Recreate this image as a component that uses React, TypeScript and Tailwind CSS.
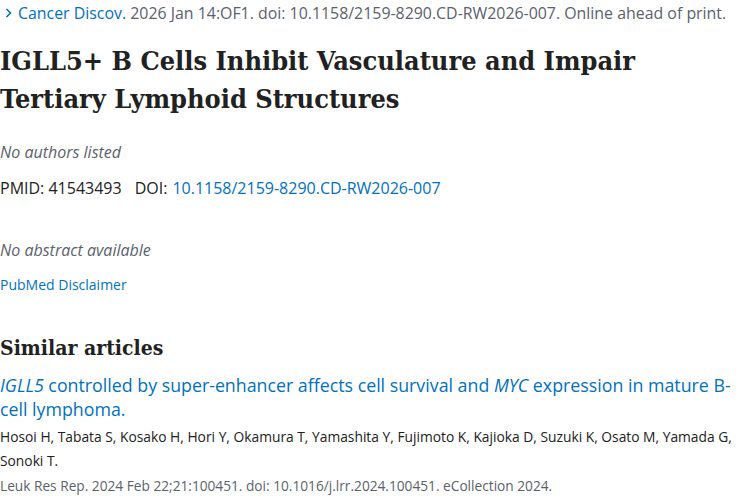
import React from "react";

const sans = { fontFamily: '"Open Sans", "Noto Sans", sans-serif' };
const serif = { fontFamily: '"DejaVu Serif Condensed", "DejaVu Serif", serif' };

export default function App() {
  return (
    <div className="w-[750px] h-[500px] overflow-hidden bg-white text-[#212121]" style={sans}>
      <div className="flex items-center h-[26px] text-[15.9px] leading-[26px]">
        <svg width="14" height="14" viewBox="0 0 14 14" className="ml-[2px] mr-[2px]">
          <path d="M4.5 3 L8.5 7 L4.5 11" fill="none" stroke="#0071bc" strokeWidth="1.6" />
        </svg>
        <span className="text-[#0071bc]">Cancer Discov.</span>
        <span className="text-[#5b616b]">&nbsp;2026 Jan 14:OF1. doi: 10.1158/2159-8290.CD-RW2026-007. Online ahead of print.</span>
      </div>
      <h1 className="mt-[16px] text-[26.9px] leading-[38px] font-bold text-[#212121]" style={serif}>
        IGLL5+ B Cells Inhibit Vasculature and Impair
        <br />
        Tertiary Lymphoid Structures
      </h1>
      <div className="mt-[22px] text-[16px] italic leading-[24px] text-[#5b616b]">No authors listed</div>
      <div className="mt-[12px] text-[16px] leading-[24px] flex">
        <span>PMID: 41543493</span>
        <span className="ml-[13px]">DOI: </span>
        <span className="ml-[5px] text-[#0071bc]">10.1158/2159-8290.CD-RW2026-007</span>
      </div>
      <div className="mt-[38px] text-[16px] italic leading-[24px] text-[#5b616b]">No abstract available</div>
      <div className="mt-[11px] text-[14px] leading-[24px] text-[#0071bc]">PubMed Disclaimer</div>
      <h2 className="mt-[36px] text-[21px] leading-[30px] font-bold" style={serif}>Similar articles</h2>
      <div className="mt-[10px] text-[17.8px] leading-[24px] text-[#0071bc]">
        <i>IGLL5</i> controlled by super-enhancer affects cell survival and <i>MYC</i> expression in mature B-
        <br />
        cell lymphoma.
      </div>
      <div className="mt-[4px] text-[13.8px] leading-[24px]">
        Hosoi H, Tabata S, Kosako H, Hori Y, Okamura T, Yamashita Y, Fujimoto K, Kajioka D, Suzuki K, Osato M, Yamada G,
        <br />
        Sonoki T.
      </div>
      <div className="mt-[1px] text-[13.7px] leading-[24px] text-[#5b616b]">
        Leuk Res Rep. 2024 Feb 22;21:100451. doi: 10.1016/j.lrr.2024.100451. eCollection 2024.
      </div>
    </div>
  );
}
